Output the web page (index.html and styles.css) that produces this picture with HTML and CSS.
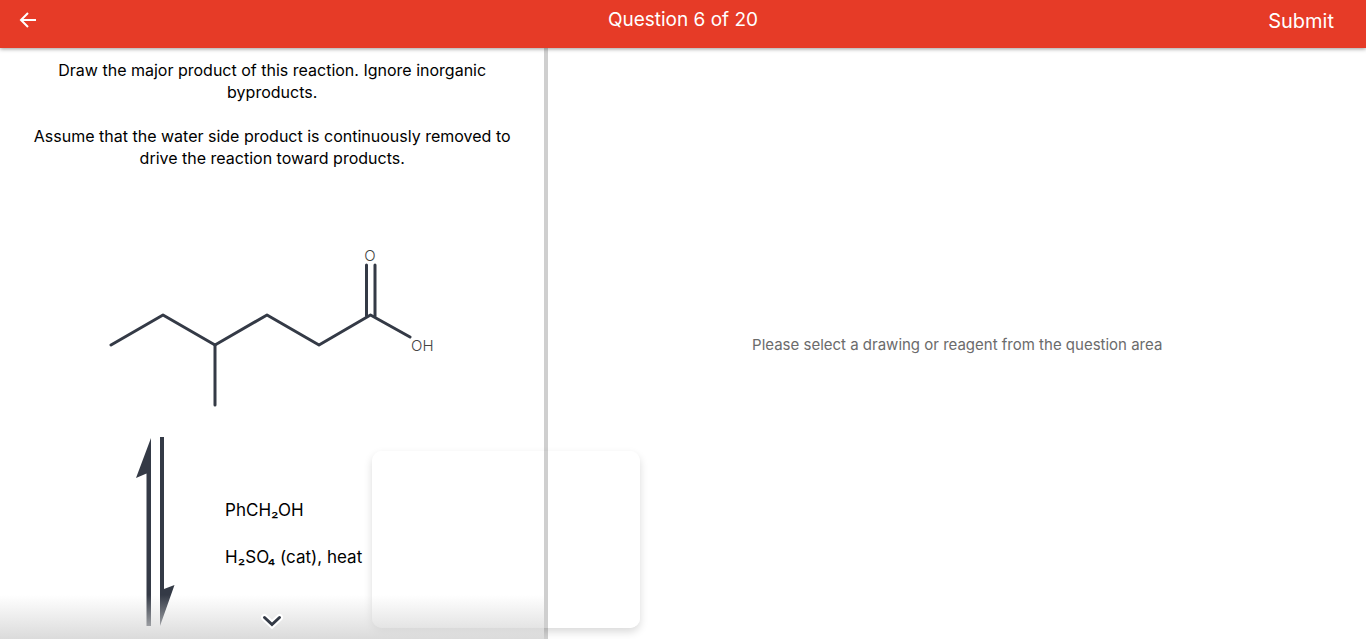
FILE: index.html
```html
<!doctype html>
<html lang="en">

<head>
    <meta charset="UTF-8">
    <meta name="viewport" content="width=device-width, initial-scale=1">
    <title>Question 6 of 20</title>
    <link rel="stylesheet" href="styles.css">
</head>

<body>
    <header class="topbar">
        <button class="back" aria-label="Back">
            <svg width="18" height="18" viewBox="0 0 18 18">
                <path d="M17 9H2M9 2L2 9l7 7" />
            </svg>
        </button>
        <h1>Question 6 of 20</h1>
        <button class="submit">Submit</button>
    </header>

    <main class="workspace">
        <section class="question">
            <div class="prompt">
                <p>Draw the major product of this reaction. Ignore inorganic byproducts.</p>
                <p>Assume that the water side product is continuously removed to drive the reaction toward products.</p>
            </div>

            <!-- 4-methylhexanoic acid -->
            <svg class="molecule" width="350" height="180" viewBox="0 0 350 180">
                <path d="M14 105L66 75L118 105L170 75L222 105L273.500 75L313 97" />
                <path d="M118 105V165M269.500 25V76M278 25V76" />
                <text x="273" y="21" text-anchor="middle">O</text>
                <text x="314" y="111">OH</text>
            </svg>

            <div class="reaction">
                <svg class="arrows" width="40" height="192" viewBox="0 0 40 192">
                    <path d="M15 2V190H10.500V37.500L0 42Z" />
                    <path d="M24 1H28V153L38.500 149L24 190Z" />
                </svg>
                <div class="reagents">
                    <p>PhCH₂OH</p>
                    <p>H₂SO₄ (cat), heat</p>
                </div>
            </div>

            <div class="card"></div>
            <div class="fade"></div>
            <button class="scroll-down" aria-label="Scroll down">
                <svg width="24" height="18" viewBox="0 0 24 18">
                    <path class="halo" d="M4.500 5.500l7.500 7l7.500-7" />
                    <path d="M4.500 5.500l7.500 7l7.500-7" />
                </svg>
            </button>
        </section>

        <section class="canvas">
            <p>Please select a drawing or reagent from the question area</p>
        </section>
    </main>
</body>
</html>
```

FILE: styles.css
```css
* {
    box-sizing: border-box;
}

body {
    margin: 0;
    height: 100vh;
    display: flex;
    flex-direction: column;
    overflow: hidden;
    font-family: Inter, "Liberation Sans", sans-serif;
    font-size: 16px;
    line-height: 22px;
    color: #000;
    background-color: #fff;
}

p {
    margin: 0;
}

button {
    padding: 0;
    border: 0;
    background: none;
    color: inherit;
    font: inherit;
    cursor: pointer;
}

svg {
    display: block;
    fill: none;
}

/* top bar */
.topbar {
    position: relative;
    z-index: 2;
    flex: none;
    display: grid;
    grid-template-columns: 1fr auto 1fr;
    align-items: center;
    height: 48px;
    padding: 0 32px 8px;
    color: #fff;
    background-color: #e63b27;
    box-shadow: 0 1px 4px rgba(0, 0, 0, 0.4);
}

.topbar h1 {
    margin: 0;
    font-size: 19px;
    font-weight: 400;
}

.back {
    justify-self: start;
    margin-left: -13px;
}

.back path {
    stroke: #fff;
    stroke-width: 2;
}

.submit {
    justify-self: end;
    padding-top: 2px;
    font-size: 20px;
}

.workspace {
    flex: 1;
    display: flex;
    min-height: 0;
}

/* question side */
.question {
    position: relative;
    width: calc(40% + 2px);
    flex: none;
    border-right: 4px solid #cfcfcf;
}

.prompt {
    display: grid;
    gap: 22px;
    padding: 11px 24px 0;
    text-align: center;
}

.molecule {
    margin: 71px auto 0;
}

.molecule path {
    stroke: #343a46;
    stroke-width: 3;
    stroke-linecap: round;
    stroke-linejoin: round;
}

.molecule text {
    fill: #444;
    font-size: 15px;
    font-weight: 300;
}

.reaction {
    display: flex;
    align-items: center;
    gap: 49px;
    margin: 16px 0 0 25%;
}

.arrows path {
    fill: #343a46;
}

.reagents {
    display: grid;
    gap: 25px;
    padding-top: 2px;
    font-size: 17px;
    white-space: nowrap;
}

.card {
    position: absolute;
    right: -96px;
    bottom: 11px;
    width: 268px;
    height: 177px;
    border-radius: 10px;
    background: linear-gradient(90deg, #fff 172px, #cfcfcf 172px, #cfcfcf 176px, #fff 176px);
    box-shadow: 0 4px 8px rgba(0, 0, 0, 0.15);
}

.fade {
    position: absolute;
    inset: auto 0 0;
    height: 44px;
    background: linear-gradient(rgba(215, 215, 215, 0), rgba(215, 215, 215, 0.9));
}

.scroll-down {
    position: absolute;
    left: 50%;
    bottom: 9px;
    transform: translateX(-50%);
}

.scroll-down path {
    stroke: #343a46;
    stroke-width: 3;
    stroke-linecap: round;
}

.scroll-down .halo {
    stroke: #fff;
    stroke-width: 7;
}

/* drawing side */
.canvas {
    flex: 1;
    display: flex;
    align-items: center;
    justify-content: center;
    padding-top: 2px;
    font-size: 15px;
    color: #6b6b6b;
}
```
